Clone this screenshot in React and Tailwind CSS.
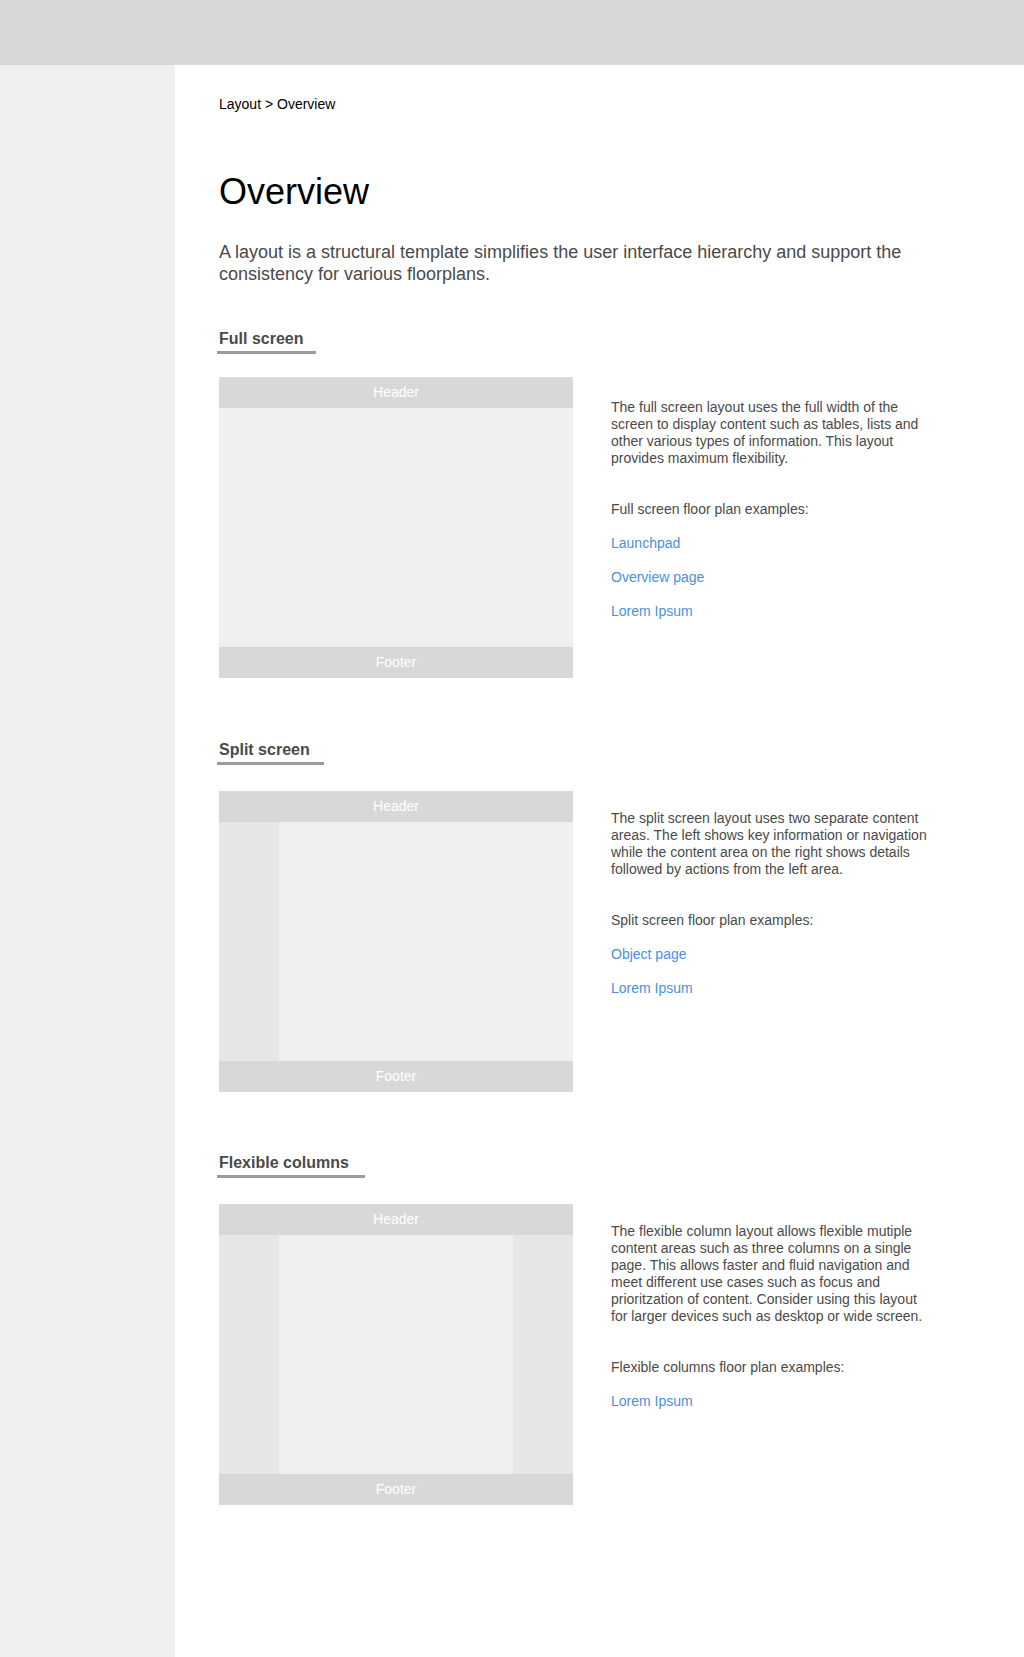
import React from "react";

const sections = [
  {
    title: "Full screen",
    bar: "w-[99px]",
    left: false,
    right: false,
    desc: "The full screen layout uses the full width of the screen to display content such as tables, lists and other various types of information. This layout provides maximum flexibility.",
    examples: "Full screen floor plan examples:",
    links: ["Launchpad", "Overview page", "Lorem Ipsum"],
  },
  {
    title: "Split screen",
    bar: "w-[107px]",
    left: true,
    right: false,
    desc: "The split screen layout uses two separate content areas. The left shows key information or navigation while the content area on the right shows details followed by actions from the left area.",
    examples: "Split screen floor plan examples:",
    links: ["Object page", "Lorem Ipsum"],
  },
  {
    title: "Flexible columns",
    bar: "w-[148px]",
    left: true,
    right: true,
    desc: "The flexible column layout allows flexible mutiple content areas such as three columns on a single page. This allows faster and fluid navigation and meet different use cases such as focus and prioritzation of content. Consider using this layout for larger devices such as desktop or wide screen.",
    examples: "Flexible columns floor plan examples:",
    links: ["Lorem Ipsum"],
  },
];

// wireframe preview of a floorplan
function Floorplan({ left, right }) {
  return (
    <div className="w-[354px] shrink-0 flex flex-col text-[14px] text-white">
      <div className="h-[31px] bg-[#d8d8d8] flex items-center justify-center">Header</div>
      <div className="h-[239px] flex">
        {left && <div className="w-[60px] bg-[#e6e6e6]" />}
        <div className="flex-1 bg-[#f0f0f0]" />
        {right && <div className="w-[60px] bg-[#e6e6e6]" />}
      </div>
      <div className="h-[31px] bg-[#d8d8d8] flex items-center justify-center">Footer</div>
    </div>
  );
}

function Section({ s, first }) {
  return (
    <section className={first ? "mt-[44px]" : "mt-[61.5px]"}>
      <h2 className="text-[16px] leading-[20px] font-bold text-[#4a4a4a]">{s.title}</h2>
      <div className={`mt-[2px] -ml-[2px] h-[3px] bg-[#9b9b9b] ${s.bar}`} />
      <div className={first ? "mt-[23px] flex" : "mt-[26px] flex"}>
        <Floorplan left={s.left} right={s.right} />
        <div className={`ml-[38px] w-[320px] text-[14px] leading-[17px] text-[#4a4a4a] ${first ? "pt-[22px]" : "pt-[19px]"}`}>
          <p>{s.desc}</p>
          <p className="mt-[34px]">{s.examples}</p>
          {s.links.map((l) => (
            <a key={l} href="#" className="block mt-[17px] text-[#4a90e2]">
              {l}
            </a>
          ))}
        </div>
      </div>
    </section>
  );
}

export default function App() {
  return (
    <div className="min-h-screen flex flex-col bg-white font-['Liberation_Sans',Arial,Helvetica,sans-serif]">
      <div className="h-[65px] shrink-0 bg-[#d8d8d8]" />
      <div className="flex flex-1">
        <aside className="w-[175px] shrink-0 bg-[#f0f0f0]" />
        <main className="flex-1 pl-[44px] pt-[31px] pb-[120px]">
          <div className="text-[14px] leading-[17px] text-black">Layout &gt; Overview</div>
          <h1 className="mt-[57px] text-[36px] leading-[44px] font-normal text-black">Overview</h1>
          <p className="mt-[27px] w-[700px] text-[18px] leading-[22px] text-[#4a4a4a]">
            A layout is a structural template simplifies the user interface hierarchy and support the consistency for various floorplans.
          </p>
          {sections.map((s, i) => (
            <Section key={s.title} s={s} first={i === 0} />
          ))}
        </main>
      </div>
    </div>
  );
}
